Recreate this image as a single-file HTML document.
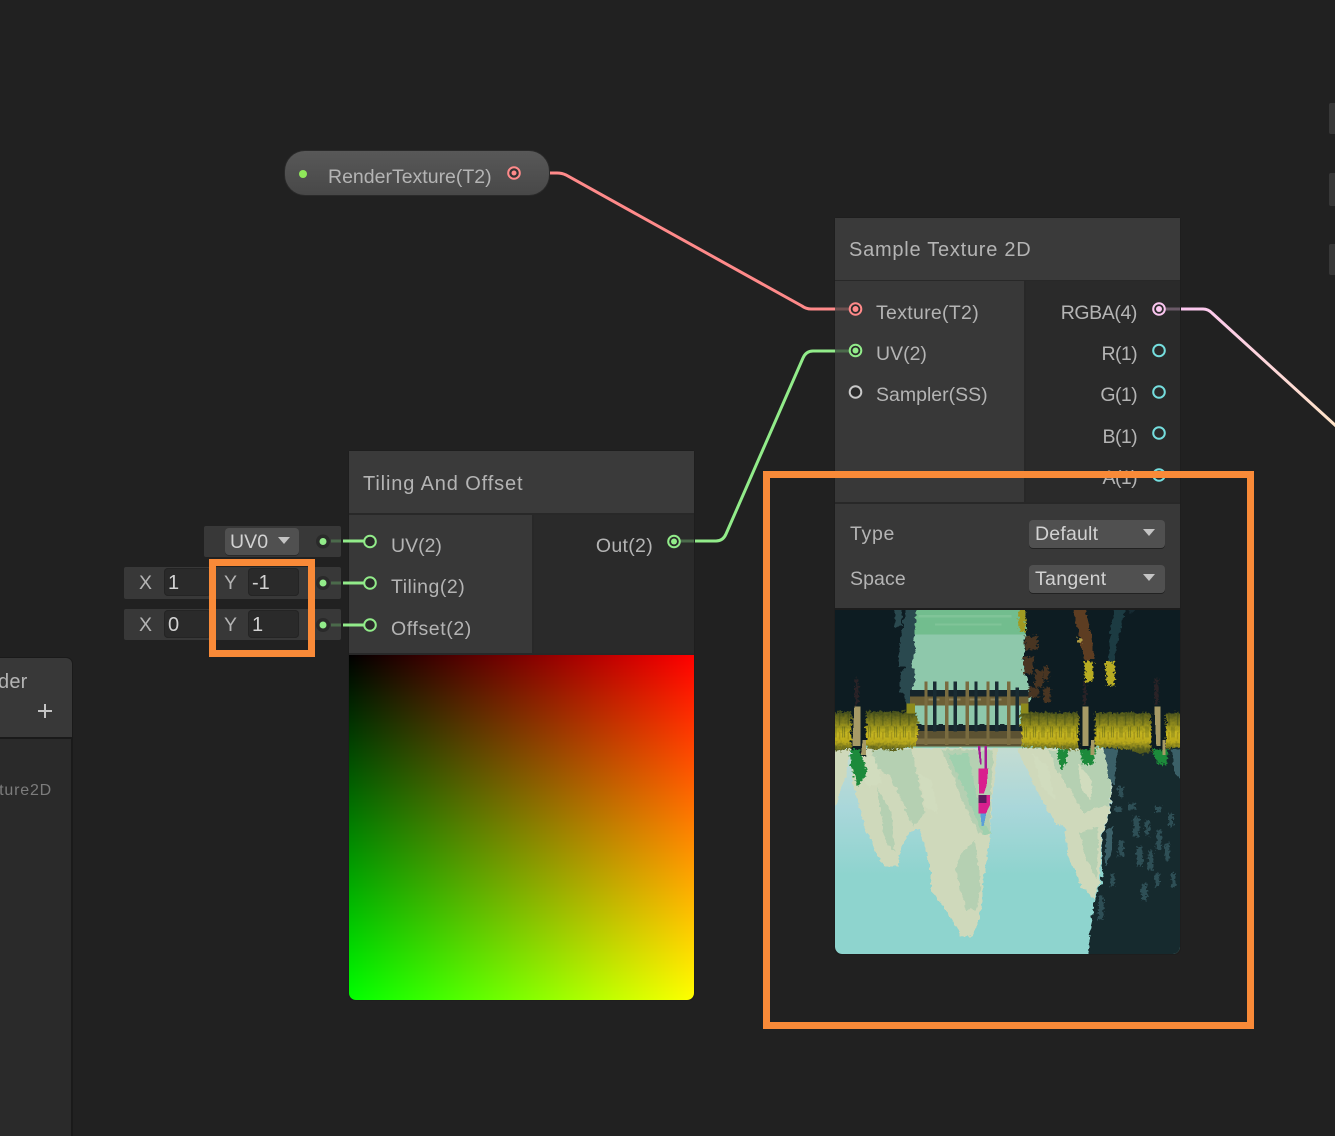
<!DOCTYPE html>
<html><head><meta charset="utf-8"><style>
html,body{margin:0;padding:0;background:#212121}
#p{position:relative;width:1335px;height:1136px;overflow:hidden;background:#212121;font-family:"Liberation Sans",sans-serif;color:#b4b4b4}
.a{position:absolute}
.t{position:absolute;font-size:19.5px;line-height:24px;white-space:nowrap}
.r{text-align:right}
.tt{font-size:20px;letter-spacing:.75px}
.n{letter-spacing:-.6px}
</style></head><body><div id="p">

<!-- right edge tabs -->
<div class="a" style="left:1329px;top:103px;width:6px;height:31px;background:#383838;border-radius:2px 0 0 2px"></div>
<div class="a" style="left:1329px;top:173px;width:6px;height:33px;background:#383838;border-radius:2px 0 0 2px"></div>
<div class="a" style="left:1329px;top:244px;width:6px;height:31px;background:#383838;border-radius:2px 0 0 2px"></div>

<!-- left cut-off node -->
<div class="a" style="left:0;top:657px;width:73px;height:479px;background:#1a1a1a;border-radius:0 7px 0 0"></div>
<div class="a" style="left:0;top:658px;width:72px;height:79px;background:#383838;border-radius:0 6px 0 0"></div>
<div class="a" style="left:0;top:739px;width:71px;height:397px;background:#2a2a2a"></div>
<div class="t" style="left:-2px;top:670px;font-size:20px;letter-spacing:.2px">der</div>
<div class="a" style="left:38px;top:710px;width:14px;height:2px;background:#c4c4c4"></div>
<div class="a" style="left:44px;top:704px;width:2px;height:14px;background:#c4c4c4"></div>
<div class="t" style="right:1283px;top:779px;font-size:16px;color:#7c7c7c;letter-spacing:.8px">ture2D</div>

<!-- Render texture pill -->
<div class="a" style="left:284px;top:150px;width:266px;height:46px;border-radius:21px;background:#2a2a2a"></div>
<div class="a" style="left:285px;top:151px;width:264px;height:44px;border-radius:20px;background:linear-gradient(#585858,#484848)"></div>
<div class="t" style="left:328px;top:165px">RenderTexture(T2)</div>

<!-- Sample Texture node -->
<div class="a" style="left:834px;top:217px;width:347px;height:738px;background:#1e1e1e;border-radius:3px 3px 7px 7px"></div>
<div class="a" style="left:835px;top:218px;width:345px;height:390px;background:#282828"></div>
<div class="a" style="left:835px;top:218px;width:345px;height:62px;background:#3a3a3a"></div>
<div class="a" style="left:835px;top:281px;width:189px;height:221px;background:#383838"></div>
<div class="a" style="left:1026px;top:281px;width:154px;height:221px;background:#2a2a2a"></div>
<div class="a" style="left:835px;top:504px;width:345px;height:104px;background:#383838"></div>
<div class="t tt" style="left:849px;top:238px">Sample Texture 2D</div>
<div class="t" style="left:876px;top:301px;letter-spacing:.3px">Texture(T2)</div>
<div class="t" style="left:876px;top:342px">UV(2)</div>
<div class="t" style="left:876px;top:383px">Sampler(SS)</div>
<div class="t r" style="right:198px;top:301px;letter-spacing:-.4px">RGBA(4)</div>
<div class="t r n" style="right:198px;top:342px">R(1)</div>
<div class="t r n" style="right:198px;top:383px">G(1)</div>
<div class="t r n" style="right:198px;top:425px">B(1)</div>
<div class="t r n" style="right:198px;top:466px">A(1)</div>
<div class="t" style="left:850px;top:522px;letter-spacing:.7px">Type</div>
<div class="t" style="left:850px;top:567px;letter-spacing:.1px">Space</div>
<div class="a" style="left:1029px;top:520px;width:136px;height:28px;background:#505050;border-radius:4px;box-shadow:0 1px 0 #222"></div>
<div class="a" style="left:1029px;top:565px;width:136px;height:28px;background:#505050;border-radius:4px;box-shadow:0 1px 0 #222"></div>
<div class="t" style="left:1035px;top:522px;color:#d2d2d2;letter-spacing:.2px">Default</div>
<div class="t" style="left:1035px;top:567px;color:#d2d2d2;letter-spacing:.3px">Tangent</div>
<div class="a" style="left:1143px;top:529px;border:6px solid transparent;border-top:7px solid #c4c4c4;border-bottom:0"></div>
<div class="a" style="left:1143px;top:574px;border:6px solid transparent;border-top:7px solid #c4c4c4;border-bottom:0"></div>

<!-- preview -->
<svg class="a" style="left:835px;top:600px" width="350" height="360" viewBox="0 0 1050 1080" shape-rendering="crispEdges">
<defs>
<clipPath id="c"><path d="M0 27H1035V1040a22 22 0 0 1-22 22H22a22 22 0 0 1-22-22Z"/></clipPath>
<linearGradient id="s" gradientUnits="userSpaceOnUse" x1="0" y1="440" x2="0" y2="1062"><stop offset="0" stop-color="#c4dcd2"/><stop offset=".3" stop-color="#a9d7da"/><stop offset=".62" stop-color="#8ed4ce"/><stop offset="1" stop-color="#8ed4ce"/></linearGradient>
<linearGradient id="g" gradientUnits="userSpaceOnUse" x1="0" y1="325" x2="0" y2="450"><stop offset="0" stop-color="#2a3a1a"/><stop offset=".18" stop-color="#5e621a"/><stop offset=".4" stop-color="#8f8a1c"/><stop offset=".62" stop-color="#c6b620"/><stop offset=".8" stop-color="#b8a81e"/><stop offset="1" stop-color="#555c1c"/></linearGradient>
<pattern id="tuft" patternUnits="userSpaceOnUse" x="0" y="330" width="26" height="120">
<path d="M11 6h5v40h-5zM2 50h3v32H2zM22 50h3v32h-3z" fill="#3d4a18" opacity=".45"/>
<path d="M11 66h5v22h-5z" fill="#8c7e18" opacity=".5"/>
</pattern>
<filter id="j" filterUnits="userSpaceOnUse" x="-40" y="-40" width="1130" height="1160"><feTurbulence type="fractalNoise" baseFrequency=".07" numOctaves="2" seed="4"/><feDisplacementMap in="SourceGraphic" scale="16" xChannelSelector="R" yChannelSelector="G"/></filter>
<filter id="k" filterUnits="userSpaceOnUse" x="-40" y="-40" width="1130" height="1160"><feTurbulence type="fractalNoise" baseFrequency=".14" numOctaves="2" seed="9"/><feDisplacementMap in="SourceGraphic" scale="22" xChannelSelector="R" yChannelSelector="G"/></filter>
</defs>
<g clip-path="url(#c)">
<rect x="0" y="440" width="1035" height="640" fill="url(#s)"/>
<rect x="0" y="20" width="1035" height="84" fill="#72bd8e"/>
<rect x="0" y="104" width="1035" height="340" fill="#8ec8ab"/>
<path d="M250 45h280v8H250zM300 70h200v6H300z" fill="#80c498"/>
<!-- dark cliffs -->
<g filter="url(#j)">
<path d="M-20 0H246L238 105 242 150 230 190 242 240 226 290 242 345H-20Z" fill="#2a4850"/>
<path d="M-20 0H215L205 70 196 120 212 200 196 262 205 285 226 345H-20Z" fill="#0e1b20"/>
<path d="M180 30h20v50h-20zM190 130h22v70h-22zM195 215h22v60h-22z" fill="#2a4850"/>
</g>
<g filter="url(#j)">
<path d="M572 0H1060V345H556L590 300 566 200 572 100Z" fill="#0e1b20"/>
<path d="M705 0 745 0 770 110 778 180 748 180 730 90Z" fill="#5d3d24"/>
<path d="M845 0 880 0 850 110 835 190 818 190 825 100Z" fill="#1f3a42"/>
<path d="M880 0H945L900 30 880 40Z" fill="#162a30"/>
</g>
<g filter="url(#k)">
<path d="M570 110h38v40h-38zM566 170h28v50h-28zM600 210h24v50h-24zM580 262h30v30h-30zM625 262h22v45h-22zM625 200h16v40h-16z" fill="#4a3420"/>
<path d="M550 30h22v65h-20z" fill="#a09a20"/>
<path d="M746 185h28v72h-22zM810 185h28v72h-22z" fill="#b7ac20"/>
<path d="M726 115h16v12h-16z" fill="#b09a40"/>
</g>
<!-- rocks -->
<g filter="url(#j)">
<path d="M-20 445 46 445 30 540 -20 670Z" fill="#cfd9bb"/>
<path d="M55 445H488L470 600 465 720 445 830 440 930 415 1010 375 1010 370 990 330 930 290 870 285 800 255 685 225 695 200 740 190 800 150 800 130 770 90 680 50 540Z" fill="#cfd9bb"/>
<path d="M545 445H830L830 540 825 640 800 700 795 850 775 895 740 860 700 770 690 680 665 670 650 650 610 580Z" fill="#cfd9bb"/>
<path d="M110 448 230 448 270 640 235 680 205 610 165 530 120 500ZM125 560 170 640 180 760 150 720ZM320 450 475 450 465 640 465 700 430 700 400 640 350 520ZM380 760 420 720 438 850 425 930 395 930 360 810ZM640 450 830 450 825 620 790 620 745 640 705 570 660 500ZM735 700 790 680 785 840 755 780Z" fill="#b5d0b2"/>
<path d="M340 460 400 460 440 660 470 700 445 705 405 610Z" fill="#9fd0ae"/>
<path d="M250 520 290 540 310 640 270 620ZM65 470 120 470 140 550 100 560ZM590 460 640 500 660 600 620 560ZM730 490 770 540 770 600 740 570Z" fill="#d1dcbe"/>
</g>
<!-- right lower cliff -->
<g filter="url(#j)">
<path d="M805 440H1060V1080H755L770 960 780 890 800 850 802 700 826 640 832 540Z" fill="#182a2f"/>
<path d="M805 445 850 450 842 500 838 560 826 540ZM815 690 835 680 830 760 810 800ZM1010 450H1050V560L1020 520Z" fill="#3a6068"/>
</g>
<g filter="url(#k)" fill="#2d4f56">
<path d="M850 560h16v30h-16zM880 610h22v20h-22zM840 620h20v18h-20zM895 650h18v60h-18zM930 660h14v45h-14zM960 620h18v18h-18zM965 690h14v60h-14zM1000 640h14v40h-14zM850 720h16v50h-16zM905 740h18v60h-18zM940 750h14v60h-14zM990 730h14v50h-14zM790 890h16v70h-16zM825 820h14v40h-14zM920 850h16v50h-16zM960 820h14v40h-14zM1010 820h12v40h-12z"/>
</g>
<!-- bridge -->
<rect x="225" y="270" width="355" height="20" fill="#16252b"/>
<rect x="225" y="290" width="355" height="26" fill="#6d6036"/>
<path d="M280 296h34v6h-34zM342 296h34v6h-34zM404 296h34v6h-34zM466 296h34v6h-34z" fill="#8f835a"/>
<rect x="240" y="375" width="325" height="20" fill="#16252b"/>
<path d="M245 372h14v6h-14zM310 372h14v6h-14zM370 372h14v6h-14zM434 372h14v6h-14zM495 372h14v6h-14z" fill="#16252b"/>
<rect x="240" y="393" width="325" height="22" fill="#5c5232"/>
<rect x="240" y="415" width="325" height="25" fill="#7c6e44"/>
<path d="M240 432h325v8H240z" fill="#5c5232"/>
<path d="M268 245h10v190h-10zM330 245h10v190h-10zM392 245h10v190h-10zM454 245h10v190h-10zM516 245h10v190h-10z" fill="#7a6c40"/>
<path d="M294 245h10v150h-10zM356 245h10v150h-10zM418 245h10v150h-10zM480 245h10v150h-10zM542 262h10v130h-10z" fill="#1a2c33"/>
<!-- grass -->
<g filter="url(#k)">
<path d="M-20 335H240L250 370 244 438 210 445 180 450 110 448 90 440 20 452-20 460Z" fill="url(#g)"/>
<path d="M556 330 590 338H1060V440L1000 445 920 462 880 448 790 442 720 450 660 445 562 442Z" fill="url(#g)"/>
</g>
<path d="M0 335H240V445H0ZM562 335H1035V445H562Z" fill="url(#tuft)"/>
<path d="M215 310h25v30h-25zM558 310h22v30h-22z" fill="#8c8a1c"/>
<!-- trunks / vines -->
<g filter="url(#k)">
<path d="M48 235h45v235H75l-25-20zM730 245h50v215h-20l-30-20zM948 235h45v235h-20l-25-20z" fill="#0f1f20"/>
<path d="M60 235h10v80H60zM745 245h10v70h-10zM960 235h10v80h-10z" fill="#2c2428"/>
<path d="M46 448h28l22 68-26 44-24-64zM735 448h48l-10 46-30 0ZM950 448h50l-6 46-24 0ZM665 448h36l-10 46-14 16Z" fill="#1e8a3a"/>
</g>
<path d="M58 320h18v118H52zM83 420h10v45H78zM742 320h18v118h-18zM768 420h10v45h-12zM958 320h18v118h-12zM982 420h10v45h-10z" fill="#a69a66"/>
<!-- character -->
<path d="M428 438h8l4 55-5 0zM449 438h7v70h-7z" fill="#a41a94"/>
<path d="M430 505h30l-5 50-8 25h-15z" fill="#d91f8e"/>
<path d="M430 585h35v30l-12 25-22 0z" fill="#d91f8e"/>
<path d="M430 585h24v24h-24z" fill="#5d1a5d"/>
<path d="M436 640h18l-8 38h-6z" fill="#5b9fd8"/>
</g>
</svg>
<div class="a" style="left:835px;top:608px;width:345px;height:2px;background:#1d1d1d"></div>

<!-- Tiling node -->
<div class="a" style="left:348px;top:450px;width:347px;height:551px;background:#1e1e1e;border-radius:3px 3px 7px 7px"></div>
<div class="a" style="left:349px;top:451px;width:345px;height:204px;background:#282828"></div>
<div class="a" style="left:349px;top:451px;width:345px;height:62px;background:#3a3a3a"></div>
<div class="a" style="left:349px;top:515px;width:183px;height:138px;background:#383838"></div>
<div class="a" style="left:534px;top:515px;width:160px;height:138px;background:#2a2a2a"></div>
<div class="a" style="left:349px;top:655px;width:345px;height:345px;border-radius:0 0 7px 7px;background:linear-gradient(to right,#000,#f00),linear-gradient(to bottom,#000,#0f0);background-blend-mode:screen"></div>
<div class="t tt" style="left:363px;top:472px;letter-spacing:.87px">Tiling And Offset</div>
<div class="t" style="left:391px;top:534px">UV(2)</div>
<div class="t" style="left:391px;top:575px;letter-spacing:.5px">Tiling(2)</div>
<div class="t" style="left:391px;top:617px;letter-spacing:.6px">Offset(2)</div>
<div class="t r" style="right:682px;top:534px;letter-spacing:.3px">Out(2)</div>

<!-- inputs -->
<div class="a" style="left:204px;top:526px;width:137px;height:31px;background:#383838;border-radius:2px"></div>
<div class="a" style="left:124px;top:567px;width:217px;height:32px;background:#383838;border-radius:2px"></div>
<div class="a" style="left:124px;top:609px;width:217px;height:31px;background:#383838;border-radius:2px"></div>
<div class="a" style="left:225px;top:528px;width:74px;height:27px;background:#505050;border-radius:4px;box-shadow:0 1px 0 #2a2a2a"></div>
<div class="t" style="left:230px;top:530px;color:#d2d2d2;letter-spacing:.1px">UV0</div>
<div class="a" style="left:278px;top:537px;border:6px solid transparent;border-top:7px solid #c4c4c4;border-bottom:0"></div>
<div class="a" style="left:164px;top:568px;width:47px;height:28px;background:#2a2a2a;border-radius:4px;box-shadow:inset 0 0 0 1px #242424"></div>
<div class="a" style="left:164px;top:610px;width:47px;height:28px;background:#2a2a2a;border-radius:4px;box-shadow:inset 0 0 0 1px #242424"></div>
<div class="a" style="left:248px;top:568px;width:51px;height:28px;background:#2a2a2a;border-radius:4px;box-shadow:inset 0 0 0 1px #242424"></div>
<div class="a" style="left:248px;top:610px;width:51px;height:28px;background:#2a2a2a;border-radius:4px;box-shadow:inset 0 0 0 1px #242424"></div>
<div class="t" style="left:139px;top:571px">X</div>
<div class="t" style="left:139px;top:613px">X</div>
<div class="t" style="left:224px;top:571px">Y</div>
<div class="t" style="left:224px;top:613px">Y</div>
<div class="t" style="left:168px;top:571px;color:#d2d2d2;font-size:20px">1</div>
<div class="t" style="left:168px;top:613px;color:#d2d2d2;font-size:20px">0</div>
<div class="t" style="left:252px;top:571px;color:#d2d2d2;font-size:20px">-1</div>
<div class="t" style="left:252px;top:613px;color:#d2d2d2;font-size:20px">1</div>

<!-- wires and ports -->
<svg class="a" style="left:0;top:0" width="1335" height="1136" fill="none">
<defs><linearGradient id="w" gradientUnits="userSpaceOnUse" x1="1181" y1="309" x2="1335" y2="425"><stop offset="0" stop-color="#fbc6f0"/><stop offset="1" stop-color="#ffe4c8"/></linearGradient></defs>
<g stroke-width="3">
<path d="M550 173H557Q562 173 566 175L802 306Q806 309 811 309H835" stroke="#ff8a8a"/>
<path d="M695 541H716Q723 541 726 534L803 358Q806 351 813 351H835" stroke="#92ec8a"/>
<path d="M1181 309H1203Q1208 309 1212 313L1336 426" stroke="url(#w)"/>
<path d="M343 541H364M343 583H364M343 625H364" stroke="#92ec8a"/>
</g>
<g stroke-width="3">
<path d="M835 309H850" stroke="#6d5050"/>
<path d="M835 351H850" stroke="#4b6a4b"/>
<path d="M1165 309H1180" stroke="#6b5a68"/>
<path d="M680 541H694" stroke="#4b6a4b"/>
<path d="M331 541H341M331 583H341M331 625H341" stroke="#4b6a4b"/>
</g>
<g stroke-width="2">
<circle cx="514" cy="173" r="5.8" stroke="#ff8a8a" fill="#333"/><circle cx="514" cy="173" r="2.5" fill="#ff8a8a"/>
<circle cx="855.500" cy="309" r="5.800" stroke="#ff8a8a" fill="#2a2a2a"/><circle cx="855.500" cy="309" r="3" fill="#ff8a8a"/>
<circle cx="855.500" cy="350.500" r="5.800" stroke="#92ec8a" fill="#2a2a2a"/><circle cx="855.500" cy="350.500" r="3" fill="#92ec8a"/>
<circle cx="855.500" cy="392" r="5.800" stroke="#c8c8c8" fill="#2a2a2a"/>
<circle cx="1159" cy="309" r="5.800" stroke="#fbc6f0" fill="#2a2a2a"/><circle cx="1159" cy="309" r="3" fill="#fbc6f0"/>
<circle cx="1159" cy="350.500" r="5.800" stroke="#75dede" fill="#2a2a2a"/>
<circle cx="1159" cy="392" r="5.800" stroke="#75dede" fill="#2a2a2a"/>
<circle cx="1159" cy="433" r="5.800" stroke="#75dede" fill="#2a2a2a"/>
<circle cx="1159" cy="475" r="5.800" stroke="#75dede" fill="#2a2a2a"/>
<circle cx="370" cy="541.500" r="5.800" stroke="#92ec8a" fill="#2a2a2a"/>
<circle cx="370" cy="583" r="5.800" stroke="#92ec8a" fill="#2a2a2a"/>
<circle cx="370" cy="625" r="5.800" stroke="#92ec8a" fill="#2a2a2a"/>
<circle cx="674" cy="541.500" r="5.800" stroke="#92ec8a" fill="#2a2a2a"/><circle cx="674" cy="541.500" r="3" fill="#92ec8a"/>
</g>
<circle cx="323" cy="541.500" r="7" fill="#2a2a2a"/><circle cx="323" cy="541.500" r="3.500" fill="#92ec8a"/>
<circle cx="323" cy="583" r="7" fill="#2a2a2a"/><circle cx="323" cy="583" r="3.500" fill="#92ec8a"/>
<circle cx="323" cy="625" r="7" fill="#2a2a2a"/><circle cx="323" cy="625" r="3.500" fill="#92ec8a"/>
<circle cx="303" cy="174" r="4" fill="#8fe85a"/>
</svg>

<!-- orange highlights -->
<div class="a" style="left:763px;top:471px;width:477px;height:544px;border:7px solid #f98a38"></div>
<div class="a" style="left:209px;top:559px;width:92px;height:84px;border:7px solid #f98a38"></div>
</div></body></html>
